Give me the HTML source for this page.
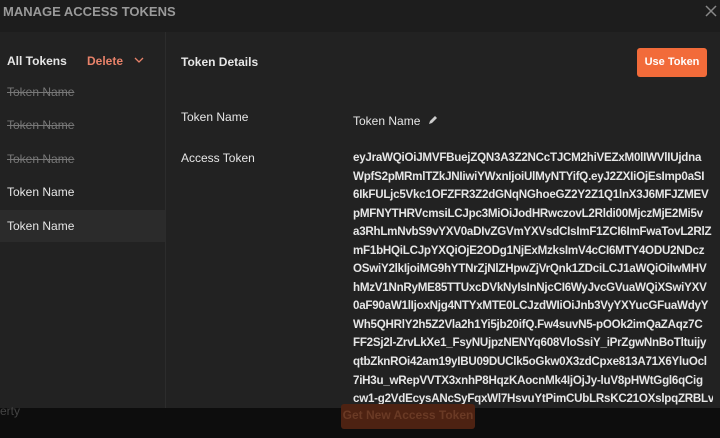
<html style="width:720px;height:438px;overflow:hidden"><head><style>
body{margin:0;width:720px;height:438px;background:#0d0d0d;font-family:"Liberation Sans",sans-serif;overflow:hidden;position:relative}
.hdr{position:absolute;left:0;top:0;width:720px;height:32px;background:#1d1d1d}
.hdr span{position:absolute;left:3px;top:4px;color:#9a9a9a;font-size:13px;font-weight:bold}
.panel{position:absolute;left:0;top:32px;width:720px;height:376px;background:#222}
.left{position:absolute;left:0;top:0;width:165px;height:376px;border-right:1px solid #2c2c2c}
.t{position:absolute;font-size:12px;color:#e6e6e6}
.s{color:#777;text-decoration:line-through}
.tok{position:absolute;left:353px;top:149px;width:360px;height:259px;overflow:hidden;color:#e6e6e6;font-size:11.6px;line-height:18.55px;font-weight:bold;letter-spacing:-0.25px;white-space:pre}
</style></head><body>
<div class="hdr"><span>MANAGE ACCESS TOKENS</span>
<svg style="position:absolute;left:705px;top:5px" width="12" height="12"><path d="M1 1L11 11M11 1L1 11" stroke="#888" stroke-width="1.5"/></svg></div>
<div class="panel">
<div class="left">
<div style="position:absolute;left:0;top:178px;width:165px;height:32px;background:#2b2b2b"></div>
</div>
</div>
<div class="t" style="left:7px;top:54px;font-weight:bold">All Tokens</div>
<div class="t" style="left:87px;top:54px;color:#e8826a;font-weight:bold">Delete</div>
<svg style="position:absolute;left:134px;top:57px" width="10" height="7"><path d="M1 1L5 5L9 1" stroke="#e8826a" fill="none" stroke-width="1.3"/></svg>
<div class="t s" style="left:7px;top:85px">Token Name</div>
<div class="t s" style="left:7px;top:118px">Token Name</div>
<div class="t s" style="left:7px;top:152px">Token Name</div>
<div class="t" style="left:7px;top:185px">Token Name</div>
<div class="t" style="left:7px;top:219px">Token Name</div>
<div class="t" style="left:181px;top:55px;font-weight:bold">Token Details</div>
<div class="t" style="left:181px;top:110px">Token Name</div>
<div class="t" style="left:181px;top:151px">Access Token</div>
<div class="t" style="left:353px;top:114px">Token Name</div>
<svg style="position:absolute;left:427px;top:114px" width="12" height="12"><path d="M2 10L3 7L8 2L10 4L5 9Z" fill="#ccc"/></svg>
<div style="position:absolute;left:637px;top:48px;width:70px;height:29px;background:#f26b3a;border-radius:3px;color:#fff;font-size:11px;font-weight:bold;text-align:center;line-height:29px">Use Token</div>
<div class="tok">eyJraWQiOiJMVFBuejZQN3A3Z2NCcTJCM2hiVEZxM0lIWVlIUjdna
WpfS2pMRmlTZkJNIiwiYWxnIjoiUlMyNTYifQ.eyJ2ZXIiOjEsImp0aSI
6IkFULjc5Vkc1OFZFR3Z2dGNqNGhoeGZ2Y2Z1Q1lnX3J6MFJZMEV
pMFNYTHRVcmsiLCJpc3MiOiJodHRwczovL2Rldi00MjczMjE2Mi5v
a3RhLmNvbS9vYXV0aDIvZGVmYXVsdCIsImF1ZCI6ImFwaTovL2RlZ
mF1bHQiLCJpYXQiOjE2ODg1NjExMzksImV4cCI6MTY4ODU2NDcz
OSwiY2lkIjoiMG9hYTNrZjNlZHpwZjVrQnk1ZDciLCJ1aWQiOiIwMHV
hMzV1NnRyME85TTUxcDVkNyIsInNjcCI6WyJvcGVuaWQiXSwiYXV
0aF90aW1lIjoxNjg4NTYxMTE0LCJzdWIiOiJnb3VyYXYucGFuaWdyY
Wh5QHRlY2h5Z2Vla2h1Yi5jb20ifQ.Fw4suvN5-pOOk2imQaZAqz7C
FF2Sj2l-ZrvLkXe1_FsyNUjpzNENYq608VloSsiY_iPrZgwNnBoTltuijy
qtbZknROi42am19yIBU09DUClk5oGkw0X3zdCpxe813A71X6YluOcl
7iH3u_wRepVVTX3xnhP8HqzKAocnMk4IjOjJy-luV8pHWtGgl6qCig
cw1-g2VdEcysANcSyFqxWl7HsvuYtPimCUbLRsKC21OXslpqZRBLv</div>
<div style="position:absolute;left:0;top:408px;width:720px;height:30px;background:#0d0d0d"></div>
<div style="position:absolute;left:0;top:404px;color:#444;font-size:12px">erty</div>
<div style="position:absolute;left:341px;top:404px;width:134px;height:25px;background:#4d2212;border-radius:3px;color:#6a3a25;font-size:12px;font-weight:bold;text-align:center;line-height:22px">Get New Access Token</div>
</body></html>
